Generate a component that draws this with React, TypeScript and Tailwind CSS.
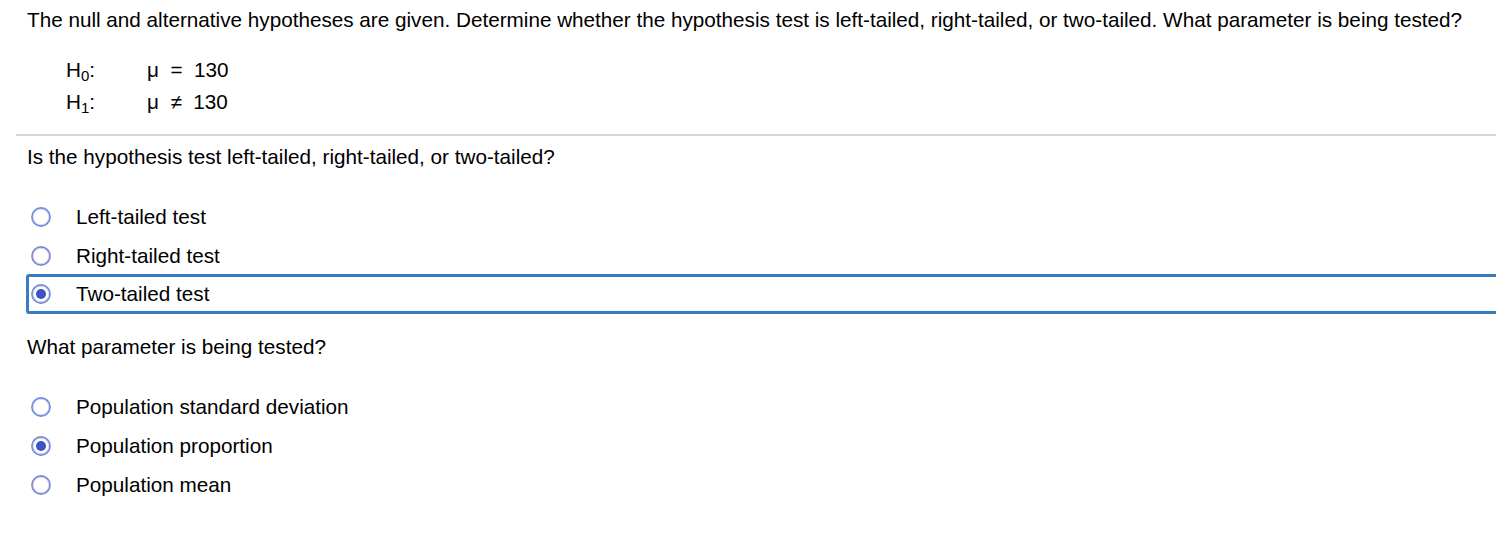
import React from "react";

type Opcion = {
  texto: string;
  marcada: boolean;
  resaltada?: boolean;
};

const PRUEBAS: Opcion[] = [
  { texto: "Left-tailed test", marcada: false },
  { texto: "Right-tailed test", marcada: false },
  { texto: "Two-tailed test", marcada: true, resaltada: true },
];

const PARAMETROS: Opcion[] = [
  { texto: "Population standard deviation", marcada: false },
  { texto: "Population proportion", marcada: true },
  { texto: "Population mean", marcada: false },
];

function Radio({ marcada }: { marcada: boolean }) {
  return (
    <svg width="22" height="22" viewBox="0 0 22 22" className="shrink-0">
      <circle cx="11" cy="11" r="9" fill="white" stroke="#7b8ad6" strokeWidth="1.8" />
      <circle cx="11" cy="11" r="7.8" fill="none" stroke="#c9cff0" strokeWidth="0.8" />
      {marcada ? <circle cx="11" cy="11" r="5" fill="#3a52c4" /> : null}
    </svg>
  );
}

function Lista({ opciones }: { opciones: Opcion[] }) {
  return (
    <div className="flex flex-col">
      {opciones.map((opcion) => (
        <div
          key={opcion.texto}
          className={
            opcion.resaltada
              ? "-mr-[20px] -mt-[1px] flex h-[40px] items-center rounded-[3px] border-[3px] border-[#3a7bc8] pl-[1px]"
              : "flex h-[39px] items-center pl-[4px]"
          }
        >
          <Radio marcada={opcion.marcada} />
          <span className="ml-[24px] text-[20.7px] leading-[24px]">{opcion.texto}</span>
        </div>
      ))}
    </div>
  );
}

export default function App() {
  return (
    <div className="min-h-[534px] bg-white pt-[8px] text-black [font-family:'Liberation_Sans',Arial,sans-serif]">
      <p className="whitespace-nowrap pl-[27px] text-[20.7px] leading-[24px]">
        The null and alternative hypotheses are given. Determine whether the
        hypothesis test is left-tailed, right-tailed, or two-tailed. What
        parameter is being tested?
      </p>

      <div className="mt-[22px] pl-[66px] text-[20.7px] leading-[32px]">
        <div className="flex">
          <span className="w-[81px]">
            H<sub className="text-[15px]">0</sub>:
          </span>
          <span>μ&nbsp;&nbsp;=&nbsp;&nbsp;130</span>
        </div>
        <div className="flex">
          <span className="w-[81px]">
            H<sub className="text-[15px]">1</sub>:
          </span>
          <span>μ&nbsp;&nbsp;≠&nbsp;&nbsp;130</span>
        </div>
      </div>

      <div className="ml-[16px] mt-[16px] h-[2px] bg-[#d2d5de]" />

      <div className="overflow-hidden pl-[26px]">
        <p className="mt-[9px] pl-[1px] text-[20.7px] leading-[24px]">
          Is the hypothesis test left-tailed, right-tailed, or two-tailed?
        </p>

        <div className="mt-[28px]">
          <Lista opciones={PRUEBAS} />
        </div>

        <p className="mt-[21px] pl-[1px] text-[20.7px] leading-[24px]">
          What parameter is being tested?
        </p>

        <div className="mt-[28px]">
          <Lista opciones={PARAMETROS} />
        </div>
      </div>
    </div>
  );
}
